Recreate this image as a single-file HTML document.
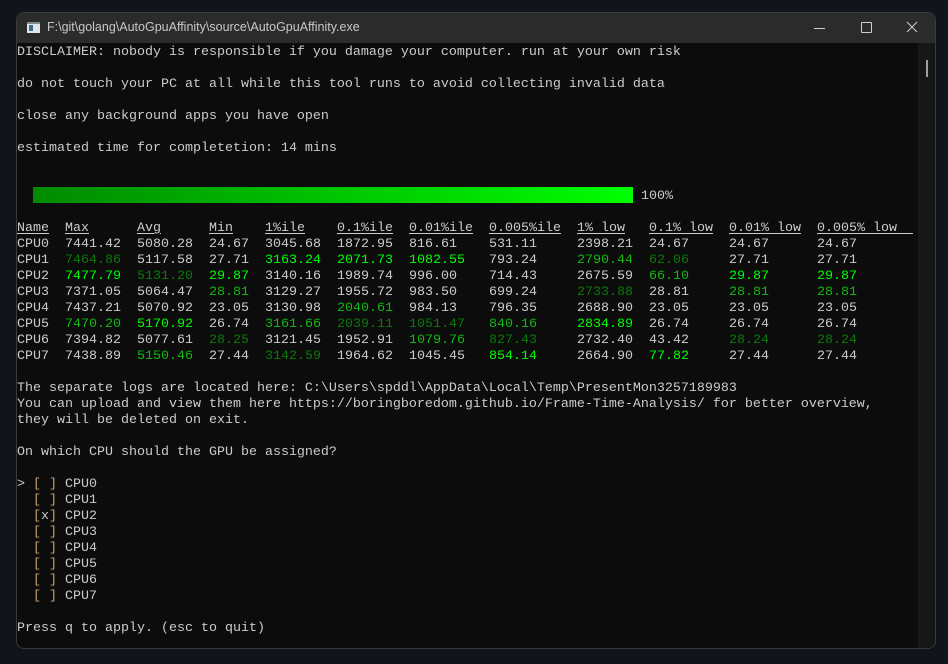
<!DOCTYPE html>
<html><head><meta charset="utf-8">
<style>
html,body{margin:0;padding:0;}
body{width:948px;height:664px;background:#11141a;position:relative;overflow:hidden;font-family:"Liberation Mono",monospace;}
.win{position:absolute;left:16px;top:12px;width:918px;height:635px;border-radius:8px;border:1px solid #3a3a3a;background:#0c0c0c;overflow:hidden;}
.title{position:absolute;left:0;top:0;width:100%;height:30px;background:#2b2b2b;}
.ttext{position:absolute;left:30px;top:7px;font-family:"Liberation Sans",sans-serif;font-size:12.5px;color:#c8c8c8;}
.icon{position:absolute;left:10px;top:9px;width:13px;height:11px;background:#dfe6ea;}
.icon:before{content:"";position:absolute;left:2px;top:3px;width:4px;height:6px;background:#3b6e8a;}
.icon:after{content:"";position:absolute;left:0;top:0;width:13px;height:2px;background:#7c8a92;}
.ctl{position:absolute;top:0;height:30px;width:46px;color:#cfcfcf;}
.sb{position:absolute;left:901px;top:30px;width:17px;height:605px;background:#171717;}
.thumb{position:absolute;left:8px;top:17px;width:2px;height:17px;background:#a0a0a0;}
.t{position:absolute;left:17px;top:45px;font-size:13.33px;line-height:16px;color:#cccccc;white-space:pre;}
.r{height:16px;white-space:pre;}
.r span{display:inline-block;white-space:pre;}
.w0{width:48px}.w1{width:72px}.w2{width:72px}.w3{width:56px}.w4{width:72px}.w5{width:72px}.w6{width:80px}.w7{width:88px}.w8{width:72px}.w9{width:80px}.w10{width:88px}
u{text-decoration:underline;text-underline-offset:2px;}
.B{color:#00ff00}.M{color:#13b813}.D{color:#0b780b}
.bar{position:absolute;left:33px;top:187px;width:600px;height:16px;background:linear-gradient(90deg,#008a00,#00ff00);}
.pct{position:absolute;left:641px;top:189px;font-size:13.33px;line-height:16px;color:#cccccc;}
.y{color:#c8a070}
</style></head><body>
<div class="win">
 <div class="title">
  <div class="icon"></div>
  <div class="ttext">F:\git\golang\AutoGpuAffinity\source\AutoGpuAffinity.exe</div>
  <div class="ctl" style="left:780px"><div style="position:absolute;left:17px;top:15px;width:11px;height:1px;background:#cfcfcf"></div></div>
  <div class="ctl" style="left:826px"><div style="position:absolute;left:18px;top:9px;width:9px;height:9px;border:1px solid #cfcfcf;border-radius:1px"></div></div>
  <div class="ctl" style="left:872px"><svg width="46" height="30" style="position:absolute;left:0;top:0"><path d="M18 9 L28 19 M28 9 L18 19" stroke="#cfcfcf" stroke-width="1"/></svg></div>
 </div>
 <div class="sb"><div class="thumb"></div></div>
</div>
<div class="bar"></div><div class="pct">100%</div>
<div class="t"><div class="r">DISCLAIMER: nobody is responsible if you damage your computer. run at your own risk</div><div class="r"></div><div class="r">do not touch your PC at all while this tool runs to avoid collecting invalid data</div><div class="r"></div><div class="r">close any background apps you have open</div><div class="r"></div><div class="r">estimated time for completetion: 14 mins</div><div class="r"></div><div class="r"></div><div class="r"></div><div class="r"></div><div class="r"><span class="w0"><u>Name</u></span><span class="w1"><u>Max</u></span><span class="w2"><u>Avg</u></span><span class="w3"><u>Min</u></span><span class="w4"><u>1%ile</u></span><span class="w5"><u>0.1%ile</u></span><span class="w6"><u>0.01%ile</u></span><span class="w7"><u>0.005%ile</u></span><span class="w8"><u>1% low</u></span><span class="w9"><u>0.1% low</u></span><span class="w10"><u>0.01% low</u></span><span><u>0.005% low  </u></span></div><div class="r"><span class="w0">CPU0</span><span class="w1">7441.42</span><span class="w2">5080.28</span><span class="w3">24.67</span><span class="w4">3045.68</span><span class="w5">1872.95</span><span class="w6">816.61</span><span class="w7">531.11</span><span class="w8">2398.21</span><span class="w9">24.67</span><span class="w10">24.67</span><span>24.67</span></div><div class="r"><span class="w0">CPU1</span><span class="w1 D">7464.86</span><span class="w2">5117.58</span><span class="w3">27.71</span><span class="w4 B">3163.24</span><span class="w5 B">2071.73</span><span class="w6 B">1082.55</span><span class="w7">793.24</span><span class="w8 M">2790.44</span><span class="w9 D">62.06</span><span class="w10">27.71</span><span>27.71</span></div><div class="r"><span class="w0">CPU2</span><span class="w1 B">7477.79</span><span class="w2 D">5131.20</span><span class="w3 B">29.87</span><span class="w4">3140.16</span><span class="w5">1989.74</span><span class="w6">996.00</span><span class="w7">714.43</span><span class="w8">2675.59</span><span class="w9 M">66.10</span><span class="w10 B">29.87</span><span class="B">29.87</span></div><div class="r"><span class="w0">CPU3</span><span class="w1">7371.05</span><span class="w2">5064.47</span><span class="w3 M">28.81</span><span class="w4">3129.27</span><span class="w5">1955.72</span><span class="w6">983.50</span><span class="w7">699.24</span><span class="w8 D">2733.88</span><span class="w9">28.81</span><span class="w10 M">28.81</span><span class="M">28.81</span></div><div class="r"><span class="w0">CPU4</span><span class="w1">7437.21</span><span class="w2">5070.92</span><span class="w3">23.05</span><span class="w4">3130.98</span><span class="w5 M">2040.61</span><span class="w6">984.13</span><span class="w7">796.35</span><span class="w8">2688.90</span><span class="w9">23.05</span><span class="w10">23.05</span><span>23.05</span></div><div class="r"><span class="w0">CPU5</span><span class="w1 M">7470.20</span><span class="w2 B">5170.92</span><span class="w3">26.74</span><span class="w4 M">3161.66</span><span class="w5 D">2039.11</span><span class="w6 D">1051.47</span><span class="w7 M">840.16</span><span class="w8 B">2834.89</span><span class="w9">26.74</span><span class="w10">26.74</span><span>26.74</span></div><div class="r"><span class="w0">CPU6</span><span class="w1">7394.82</span><span class="w2">5077.61</span><span class="w3 D">28.25</span><span class="w4">3121.45</span><span class="w5">1952.91</span><span class="w6 M">1079.76</span><span class="w7 D">827.43</span><span class="w8">2732.40</span><span class="w9">43.42</span><span class="w10 D">28.24</span><span class="D">28.24</span></div><div class="r"><span class="w0">CPU7</span><span class="w1">7438.89</span><span class="w2 M">5150.46</span><span class="w3">27.44</span><span class="w4 D">3142.59</span><span class="w5">1964.62</span><span class="w6">1045.45</span><span class="w7 B">854.14</span><span class="w8">2664.90</span><span class="w9 B">77.82</span><span class="w10">27.44</span><span>27.44</span></div><div class="r"></div><div class="r">The separate logs are located here: C:\Users\spddl\AppData\Local\Temp\PresentMon3257189983</div><div class="r">You can upload and view them here https://boringboredom.github.io/Frame-Time-Analysis/ for better overview,</div><div class="r">they will be deleted on exit.</div><div class="r"></div><div class="r">On which CPU should the GPU be assigned?</div><div class="r"></div><div class="r">&gt; <span class="y">[ ]</span> CPU0</div><div class="r">  <span class="y">[ ]</span> CPU1</div><div class="r">  <span class="y">[</span>x<span class="y">]</span> CPU2</div><div class="r">  <span class="y">[ ]</span> CPU3</div><div class="r">  <span class="y">[ ]</span> CPU4</div><div class="r">  <span class="y">[ ]</span> CPU5</div><div class="r">  <span class="y">[ ]</span> CPU6</div><div class="r">  <span class="y">[ ]</span> CPU7</div><div class="r"></div><div class="r">Press q to apply. (esc to quit)</div></div>
</body></html>
